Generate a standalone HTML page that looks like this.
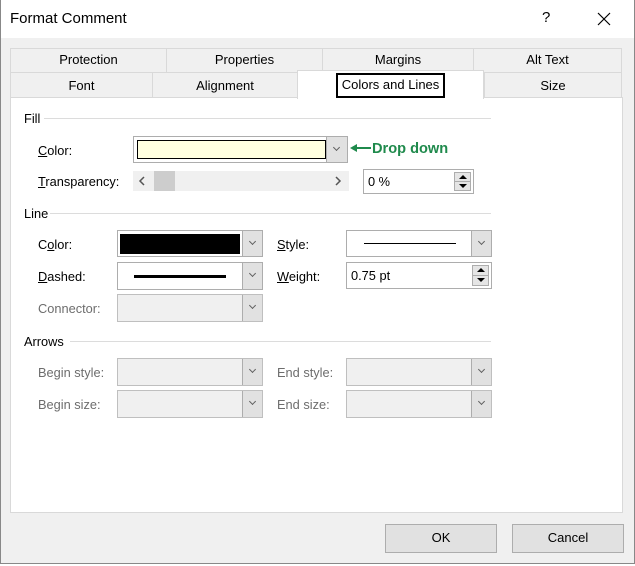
<!DOCTYPE html>
<html><head><style>
*{margin:0;padding:0;box-sizing:border-box}
body{width:635px;height:566px;background:#f0f0f0;font-family:"Liberation Sans",sans-serif;font-size:12.8px;color:#000;position:relative;overflow:hidden}
.a{position:absolute}
.t{position:absolute;white-space:nowrap;line-height:14px}
.tab{position:absolute;background:#f0f0f0;border:1px solid #d9d9d9;text-align:center;line-height:22px;font-size:13px}
.combo{position:absolute;background:#fff;border:1px solid #adadad}
.combo .btn{position:absolute;right:0;top:0;bottom:0;width:20px;background:#e1e1e1;border-left:1px solid #adadad}
.combo .btn:after{content:"";position:absolute;left:7px;top:8px;width:4px;height:4px;border-right:1px solid #606060;border-bottom:1px solid #606060;transform:rotate(45deg)}
.dis{background:#f0f0f0;border-color:#bfbfbf}
.g{color:#6d6d6d}
.sep{position:absolute;height:1px;background:#dcdcdc}
.spin{position:absolute;background:#fff;border:1px solid #adadad}
.spin .u,.spin .d{position:absolute;right:2px;width:17px;height:10px;background:#e5e5e5;border:1px solid #adadad}
.spin .u{top:2px}.spin .d{bottom:2px}
.spin .u:after{content:"";position:absolute;left:4px;top:2px;border-left:4px solid transparent;border-right:4px solid transparent;border-bottom:4px solid #000}
.spin .d:after{content:"";position:absolute;left:4px;top:2px;border-left:4px solid transparent;border-right:4px solid transparent;border-top:4px solid #000}
.button{position:absolute;background:#e1e1e1;border:1px solid #adadad;text-align:center;line-height:26px;font-size:13px}
u{text-decoration:underline}
</style></head><body>
<div class="a" style="left:0;top:0;width:635px;height:38px;background:#fff"></div>
<div class="a" style="left:0;top:0;width:1px;height:566px;background:#888"></div>
<div class="a" style="right:0;top:0;width:1px;height:566px;background:#888"></div>
<div class="t" style="left:10px;top:12px;font-size:15px">Format Comment</div>
<div class="t" style="left:542px;top:11px;font-size:15px">?</div>
<svg class="a" style="left:597px;top:12px" width="14" height="14"><path d="M1 1L13 13M13 1L1 13" stroke="#000" stroke-width="1.2"/></svg>

<div class="tab" style="left:10px;top:48px;width:157px;height:25px">Protection</div>
<div class="tab" style="left:166px;top:48px;width:157px;height:25px">Properties</div>
<div class="tab" style="left:322px;top:48px;width:152px;height:25px">Margins</div>
<div class="tab" style="left:473px;top:48px;width:149px;height:25px">Alt Text</div>
<div class="tab" style="left:10px;top:72px;width:143px;height:26px;line-height:26px">Font</div>
<div class="tab" style="left:152px;top:72px;width:146px;height:26px;line-height:26px">Alignment</div>
<div class="tab" style="left:484px;top:72px;width:138px;height:26px;line-height:26px">Size</div>

<div class="a" style="left:10px;top:97px;width:613px;height:416px;background:#fff;border:1px solid #d9d9d9"></div>
<div class="a" style="left:297px;top:70px;width:187px;height:29px;background:#fff;border:1px solid #d9d9d9;border-bottom:none"></div>
<div class="a" style="left:336px;top:73px;width:109px;height:25px;border:2px solid #000;text-align:center;line-height:20px;font-size:13px">Colors and Lines</div>

<div class="t" style="left:24px;top:112px">Fill</div>
<div class="sep" style="left:44px;top:118px;width:447px"></div>
<div class="t" style="left:38px;top:144px"><u>C</u>olor:</div>
<div class="combo" style="left:133px;top:136px;width:215px;height:27px"><div class="a" style="left:3px;top:3px;width:189px;height:19px;background:#ffffe0;border:1px solid #000"></div><div class="btn" style="width:21px"></div></div>
<svg class="a" style="left:349px;top:143px" width="24" height="10"><path d="M4 5H22" stroke="#1f8a4c" stroke-width="2"/><path d="M1 5L8 1V9Z" fill="#1f8a4c"/></svg>
<div class="t" style="left:372px;top:142px;font-size:14.6px;font-weight:bold;color:#1f8a4c">Drop down</div>
<div class="t" style="left:38px;top:175px"><u>T</u>ransparency:</div>
<div class="a" style="left:133px;top:171px;width:216px;height:20px;background:#f0f0f0"></div>
<div class="a" style="left:154px;top:171px;width:21px;height:20px;background:#cdcdcd"></div>
<svg class="a" style="left:137px;top:175px" width="10" height="12"><path d="M7 2L3 6L7 10" stroke="#555" stroke-width="1.5" fill="none"/></svg>
<svg class="a" style="left:333px;top:175px" width="10" height="12"><path d="M3 2L7 6L3 10" stroke="#555" stroke-width="1.5" fill="none"/></svg>
<div class="spin" style="left:363px;top:169px;width:111px;height:25px"><div class="t" style="left:4px;top:5px">0 %</div><div class="u"></div><div class="d"></div></div>

<div class="t" style="left:24px;top:207px">Line</div>
<div class="sep" style="left:50px;top:213px;width:441px"></div>
<div class="t" style="left:38px;top:238px">C<u>o</u>lor:</div>
<div class="combo" style="left:117px;top:230px;width:146px;height:27px"><div class="a" style="left:2px;top:3px;width:120px;height:20px;background:#000"></div><div class="btn"></div></div>
<div class="t" style="left:277px;top:238px"><u>S</u>tyle:</div>
<div class="combo" style="left:346px;top:230px;width:146px;height:27px"><div class="a" style="left:17px;top:12px;width:92px;height:1px;background:#000"></div><div class="btn"></div></div>
<div class="t" style="left:38px;top:270px"><u>D</u>ashed:</div>
<div class="combo" style="left:117px;top:262px;width:146px;height:28px"><div class="a" style="left:16px;top:12px;width:92px;height:3px;background:#000"></div><div class="btn"></div></div>
<div class="t" style="left:277px;top:270px"><u>W</u>eight:</div>
<div class="spin" style="left:346px;top:262px;width:146px;height:27px"><div class="t" style="left:4px;top:6px">0.75 pt</div><div class="u" style="height:11px"></div><div class="d" style="height:11px"></div></div>
<div class="t g" style="left:38px;top:302px">Connector:</div>
<div class="combo dis" style="left:117px;top:294px;width:146px;height:28px"><div class="btn"></div></div>

<div class="t" style="left:24px;top:335px">Arrows</div>
<div class="sep" style="left:70px;top:341px;width:421px"></div>
<div class="t g" style="left:38px;top:366px">Begin style:</div>
<div class="combo dis" style="left:117px;top:358px;width:146px;height:28px"><div class="btn"></div></div>
<div class="t g" style="left:277px;top:366px">End style:</div>
<div class="combo dis" style="left:346px;top:358px;width:146px;height:28px"><div class="btn"></div></div>
<div class="t g" style="left:38px;top:398px">Begin size:</div>
<div class="combo dis" style="left:117px;top:390px;width:146px;height:28px"><div class="btn"></div></div>
<div class="t g" style="left:277px;top:398px">End size:</div>
<div class="combo dis" style="left:346px;top:390px;width:146px;height:28px"><div class="btn"></div></div>

<div class="button" style="left:385px;top:524px;width:112px;height:29px">OK</div>
<div class="button" style="left:512px;top:524px;width:112px;height:29px">Cancel</div>
<div class="a" style="left:0;top:563px;width:635px;height:1px;background:#888"></div>
<div class="a" style="left:0;top:564px;width:635px;height:2px;background:#fff"></div>
</body></html>
